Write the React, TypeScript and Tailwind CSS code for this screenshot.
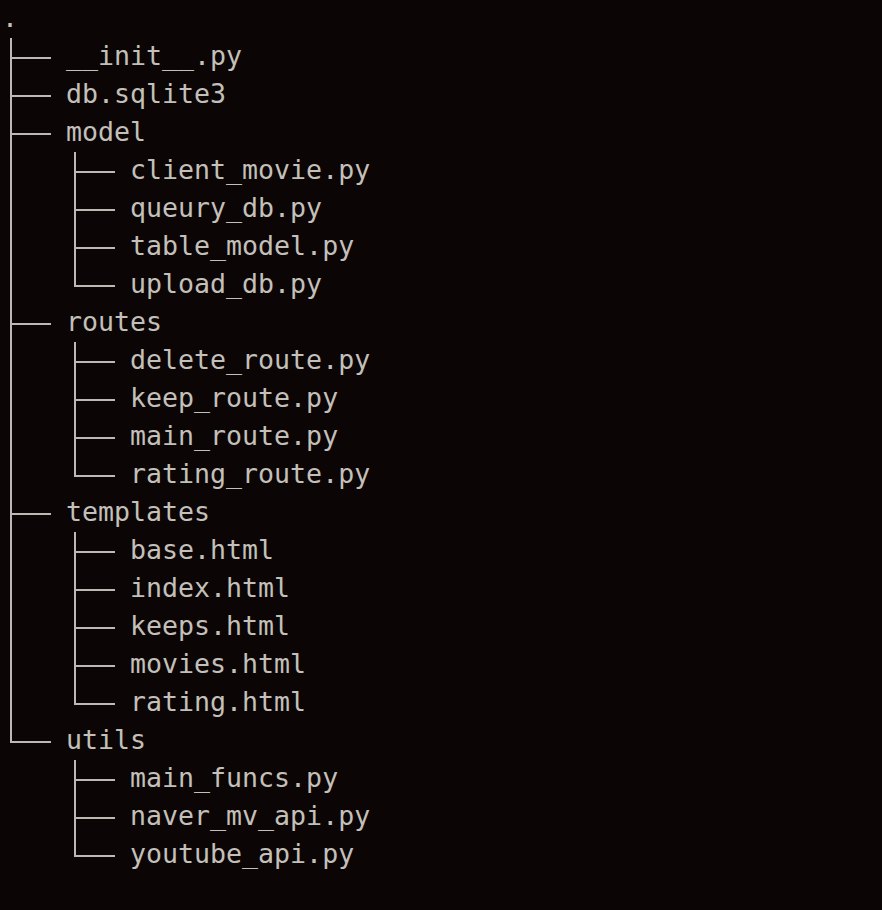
type Seg = 'bar' | 'blank' | 'tee' | 'end';

const rows: { prefix: Seg[]; name: string }[] = [
  { prefix: [], name: '.' },
  { prefix: ['tee'], name: '__init__.py' },
  { prefix: ['tee'], name: 'db.sqlite3' },
  { prefix: ['tee'], name: 'model' },
  { prefix: ['bar', 'tee'], name: 'client_movie.py' },
  { prefix: ['bar', 'tee'], name: 'queury_db.py' },
  { prefix: ['bar', 'tee'], name: 'table_model.py' },
  { prefix: ['bar', 'end'], name: 'upload_db.py' },
  { prefix: ['tee'], name: 'routes' },
  { prefix: ['bar', 'tee'], name: 'delete_route.py' },
  { prefix: ['bar', 'tee'], name: 'keep_route.py' },
  { prefix: ['bar', 'tee'], name: 'main_route.py' },
  { prefix: ['bar', 'end'], name: 'rating_route.py' },
  { prefix: ['tee'], name: 'templates' },
  { prefix: ['bar', 'tee'], name: 'base.html' },
  { prefix: ['bar', 'tee'], name: 'index.html' },
  { prefix: ['bar', 'tee'], name: 'keeps.html' },
  { prefix: ['bar', 'tee'], name: 'movies.html' },
  { prefix: ['bar', 'end'], name: 'rating.html' },
  { prefix: ['end'], name: 'utils' },
  { prefix: ['blank', 'tee'], name: 'main_funcs.py' },
  { prefix: ['blank', 'tee'], name: 'naver_mv_api.py' },
  { prefix: ['blank', 'end'], name: 'youtube_api.py' },
];

function Connector({ kind }: { kind: Seg }) {
  if (kind === 'blank') return <div className="h-[38px] w-[64px] shrink-0" />;
  if (kind === 'bar')
    return (
      <div className="h-[38px] w-[64px] shrink-0 pl-[10px]">
        <div className="h-full border-l-2 border-[#bdbab5]" />
      </div>
    );
  if (kind === 'end')
    return (
      <div className="h-[38px] w-[64px] shrink-0 pl-[10px]">
        <div className="h-[21px] w-[41px] border-b-2 border-l-2 border-[#bdbab5]" />
      </div>
    );
  return (
    <div className="h-[38px] w-[64px] shrink-0 pl-[10px]">
      <div className="h-full border-l-2 border-[#bdbab5] pt-[19px]">
        <div className="h-[2px] w-[39px] bg-[#bdbab5]" />
      </div>
    </div>
  );
}

export default function App() {
  return (
    <div className="min-h-[910px] w-[882px] bg-[#0c0505] text-[#c3c0ba] font-['DejaVu_Sans_Mono',monospace] text-[26.6px] leading-[38px]">
      {rows.map((r, i) => (
        <div key={i} className="flex h-[38px] items-start">
          {r.prefix.map((s, j) => (
            <Connector key={j} kind={s} />
          ))}
          <span className="whitespace-pre pl-[2px] -mt-px">{r.name}</span>
        </div>
      ))}
    </div>
  );
}
